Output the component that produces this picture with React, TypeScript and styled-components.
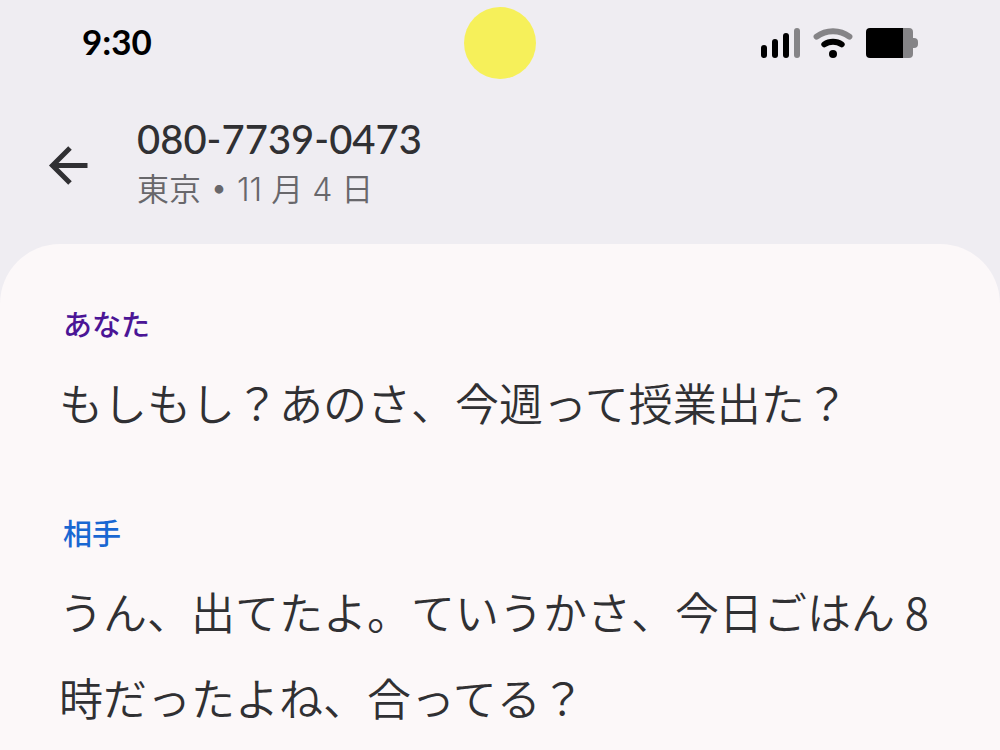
import React from "react";
import styled, { createGlobalStyle } from "styled-components";

const GlobalStyle = createGlobalStyle`
  * { box-sizing: border-box; }
  html, body, #root { height: 100%; }
  body {
    margin: 0;
    background: #efedf2;
    color: #303033;
    font-family: "Noto Sans CJK JP", sans-serif;
  }
  h1, h2, p { margin: 0; font-weight: 400; }
`;

const Screen = styled.div`
  min-height: 100%;
  display: flex;
  flex-direction: column;
  overflow: hidden;
`;

const StatusBar = styled.div`
  height: 86px;
  padding: 0 82px;
  display: grid;
  grid-template-columns: 1fr auto 1fr;
  align-items: center;
`;

const Clock = styled.time`
  padding-bottom: 4px;
  font: 700 35px/40px Lato, sans-serif;
  color: #000;
`;

const Camera = styled.div`
  width: 72px;
  height: 72px;
  border-radius: 50%;
  background: #f6f05a;
`;

const StatusIcons = styled.div`
  display: flex;
  align-items: center;
  justify-content: flex-end;
  gap: 13px;
`;

const CallHeader = styled.header`
  display: flex;
  align-items: center;
  gap: 41px;
  padding: 31px 40px 29px;
`;

const BackButton = styled.button`
  display: flex;
  width: 56px;
  height: 56px;
  padding: 0;
  border: 0;
  background: none;
  align-items: center;
  justify-content: center;
  color: #303033;
  cursor: pointer;
`;

const PhoneNumber = styled.h1`
  margin-bottom: 4px;
  font: 500 40px/44px Lato, sans-serif;
`;

const CallInfo = styled.p`
  font-family: Inter, "Noto Sans CJK JP", sans-serif;
  font-size: 32px;
  font-weight: 350;
  line-height: 50px;
  color: #68676b;
`;

const Transcript = styled.main`
  flex: 1;
  padding: 59px 59px 0;
  border-radius: 60px 60px 0 0;
  background: #fcf8f9;
`;

const Message = styled.section`
  margin-bottom: 67px;

  &:last-child { margin-bottom: 0; }
`;

const Speaker = styled.h2<{ $color: string }>`
  padding-left: 4px;
  margin-bottom: 16px;
  font-size: 29px;
  font-weight: 500;
  line-height: 40px;
  color: ${(p) => p.$color};
`;

const Speech = styled.p`
  font-size: 44px;
  font-weight: 350;
  line-height: 86px;
`;

function SignalIcon() {
  return (
    <svg width="40" height="30" viewBox="0 0 40 30" aria-hidden="true">
      <rect x="1" y="17" width="6" height="13" rx="3" />
      <rect x="12" y="11" width="6" height="19" rx="3" />
      <rect x="23" y="5" width="6" height="25" rx="3" />
      <rect x="34" y="0" width="6" height="30" rx="3" fill="#858487" />
    </svg>
  );
}

function WifiIcon() {
  return (
    <svg width="40" height="30" viewBox="0 0 40 30" fill="none" strokeWidth="6" strokeLinecap="round" aria-hidden="true">
      <path d="M3.6 8.6C13 1.4 27 1.4 36.4 8.6" stroke="#858487" />
      <path d="M11.3 16.4C16.4 12.9 23.6 12.9 28.7 16.4" stroke="#000" />
      <circle cx="20" cy="26" r="4" fill="#000" />
    </svg>
  );
}

function BatteryIcon() {
  return (
    <svg width="52" height="30" viewBox="0 0 52 30" aria-hidden="true">
      <path d="M37 0h6a4 4 0 0 1 4 4v6h1a4 4 0 0 1 4 4v2a4 4 0 0 1-4 4h-1v6a4 4 0 0 1-4 4h-6z" fill="#858487" />
      <path d="M4 0h33v30H4a4 4 0 0 1-4-4V4a4 4 0 0 1 4-4z" />
    </svg>
  );
}

function BackArrow() {
  return (
    <svg width="40" height="40" viewBox="0 0 40 40" fill="none" stroke="currentColor" strokeWidth="5" aria-hidden="true">
      <path d="M39.5 19.5H4M22 2L4.5 19.5L22 37" />
    </svg>
  );
}

export default function App() {
  return (
    <Screen>
      <GlobalStyle />
      <StatusBar>
        <Clock>9:30</Clock>
        <Camera />
        <StatusIcons>
          <SignalIcon />
          <WifiIcon />
          <BatteryIcon />
        </StatusIcons>
      </StatusBar>
      <CallHeader>
        <BackButton type="button" aria-label="戻る">
          <BackArrow />
        </BackButton>
        <div>
          <PhoneNumber>080-7739-0473</PhoneNumber>
          <CallInfo>東京 • 11 月 4 日</CallInfo>
        </div>
      </CallHeader>
      <Transcript>
        <Message>
          <Speaker $color="#4b1596">あなた</Speaker>
          <Speech>もしもし？あのさ、今週って授業出た？</Speech>
        </Message>
        <Message>
          <Speaker $color="#1967d2">相手</Speaker>
          <Speech>うん、出てたよ。ていうかさ、今日ごはん 8 時だったよね、合ってる？</Speech>
        </Message>
      </Transcript>
    </Screen>
  );
}
